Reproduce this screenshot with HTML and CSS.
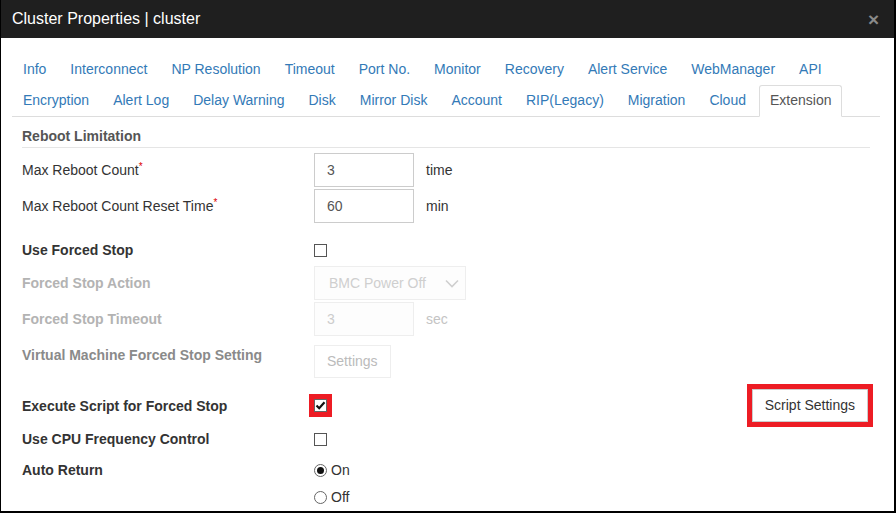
FILE: index.html
```html
<!DOCTYPE html>
<html>
<head>
<meta charset="utf-8">
<link rel="stylesheet" href="styles.css">
</head>
<body>
<div class="dialog">
  <div class="titlebar">
    <span class="title">Cluster Properties | cluster</span>
    <span class="close">×</span>
  </div>
  <div class="content">
    <ul class="tabs">
      <li><a>Info</a></li>
      <li><a>Interconnect</a></li>
      <li><a>NP Resolution</a></li>
      <li><a>Timeout</a></li>
      <li><a>Port No.</a></li>
      <li><a>Monitor</a></li>
      <li><a>Recovery</a></li>
      <li><a>Alert Service</a></li>
      <li><a>WebManager</a></li>
      <li><a>API</a></li>
      <li><a>Encryption</a></li>
      <li><a>Alert Log</a></li>
      <li><a>Delay Warning</a></li>
      <li><a>Disk</a></li>
      <li><a>Mirror Disk</a></li>
      <li><a>Account</a></li>
      <li><a>RIP(Legacy)</a></li>
      <li><a>Migration</a></li>
      <li><a>Cloud</a></li>
      <li class="active"><a>Extension</a></li>
    </ul>
    <div class="pane">
      <div class="section-title">Reboot Limitation</div>

      <div class="row row-input first">
        <div class="lbl">Max Reboot Count<span class="req">*</span></div>
        <div class="ctl"><div class="input">3</div><span class="unit">time</span></div>
      </div>
      <div class="row row-input">
        <div class="lbl">Max Reboot Count Reset Time<span class="req">*</span></div>
        <div class="ctl"><div class="input">60</div><span class="unit">min</span></div>
      </div>

      <div class="row row-check-top">
        <div class="lbl bold">Use Forced Stop</div>
        <div class="ctl"><span class="cb"></span></div>
      </div>
      <div class="row row-select">
        <div class="lbl bold disabled">Forced Stop Action</div>
        <div class="ctl">
          <div class="select">
            <span>BMC Power Off</span>
            <svg class="chev" width="14" height="9" viewBox="0 0 14 9"><path d="M1 1.5 L7 7.5 L13 1.5" fill="none" stroke="#cfcfcf" stroke-width="1.6"/></svg>
          </div>
        </div>
      </div>
      <div class="row row-input">
        <div class="lbl bold disabled">Forced Stop Timeout</div>
        <div class="ctl"><div class="input dis">3</div><span class="unit dis-unit">sec</span></div>
      </div>
      <div class="row row-vm">
        <div class="lbl bold vm">Virtual Machine Forced Stop Setting</div>
        <div class="ctl"><div class="btn dis-btn">Settings</div></div>
      </div>

      <div class="row row-exec">
        <div class="lbl bold">Execute Script for Forced Stop</div>
        <div class="ctl">
          <span class="cb checked hl">
            <svg width="11" height="11" viewBox="0 0 11 11"><path d="M1.5 5.5 L4.2 8.2 L9.5 2.2" fill="none" stroke="#111" stroke-width="2.2"/></svg>
          </span>
          <div class="spacer"></div>
          <div class="btn hl-btn">Script Settings</div>
        </div>
      </div>
      <div class="row row-cpu">
        <div class="lbl bold">Use CPU Frequency Control</div>
        <div class="ctl"><span class="cb"></span></div>
      </div>
      <div class="row row-radio">
        <div class="lbl bold">Auto Return</div>
        <div class="ctl"><span class="rb on"></span><span class="rlabel">On</span></div>
      </div>
      <div class="row row-radio2">
        <div class="lbl"></div>
        <div class="ctl"><span class="rb"></span><span class="rlabel">Off</span></div>
      </div>
    </div>
  </div>
</div>
</body>
</html>
```
FILE: styles.css
```css
html, body {
  margin: 0;
  padding: 0;
  background: #fff;
}
body {
  font-family: "Liberation Sans", Arial, sans-serif;
  font-size: 14px;
  color: #333;
}
.dialog {
  width: 896px;
  height: 513px;
  box-sizing: border-box;
  border-left: 1px solid #000;
  border-right: 2px solid #000;
  border-bottom: 2px solid #000;
  overflow: hidden;
  background: #fff;
}
.titlebar {
  height: 38px;
  background: #1f1f1f;
  display: flex;
  align-items: center;
  justify-content: space-between;
  padding: 0 15px 0 11px;
}
.title {
  color: #fff;
  font-size: 16px;
}
.close {
  color: #8a8a8a;
  font-size: 19px;
  font-weight: bold;
  line-height: 1;
}
.content {
  padding: 16px 14px 0 11px;
}
.tabs {
  list-style: none;
  margin: 0;
  padding: 0;
  display: flex;
  flex-wrap: wrap;
  border-bottom: 1px solid #ddd;
}
.tabs li {
  margin-bottom: -1px;
  margin-right: 2px;
}
.tabs a {
  display: block;
  padding: 4px 10px 6px;
  line-height: 20px;
  border: 1px solid transparent;
  border-radius: 3px 3px 0 0;
  color: #337ab7;
}
.tabs li.active a {
  color: #555;
  background: #fff;
  border-color: #ddd #ddd transparent;
}
.pane {
  padding: 0 10px;
}
.section-title {
  margin-top: 10px;
  font-size: 14px;
  font-weight: bold;
  color: #555;
  line-height: 18px;
  padding-bottom: 2px;
  border-bottom: 1px solid #e5e5e5;
}
.row {
  display: flex;
  align-items: center;
}
.lbl {
  width: 292px;
  flex: none;
  line-height: 20px;
}
.lbl.bold {
  font-weight: bold;
  font-size: 14px;
}
.lbl.disabled {
  color: #b3b3b3;
}
.lbl.vm {
  color: #8a8a8a;
}
.req {
  color: #d00;
  font-size: 10px;
  vertical-align: top;
  line-height: 14px;
}
.ctl {
  display: flex;
  align-items: center;
  flex: 1;
}
.row-input {
  height: 34px;
  margin-top: 2px;
}
.row-input.first {
  margin-top: 5px;
}
.row-check-top {
  height: 32px;
  margin-top: 11px;
}
.row-select {
  height: 34px;
}
.row-vm {
  height: 33px;
  margin-top: 9px;
  align-items: flex-start;
}
.row-exec {
  height: 43px;
  margin-top: 6px;
}
.row-cpu {
  height: 22px;
  margin-top: 1px;
}
.row-radio {
  height: 20px;
  margin-top: 10px;
}
.row-radio2 {
  height: 20px;
  margin-top: 7px;
}
.input {
  width: 100px;
  height: 34px;
  box-sizing: border-box;
  border: 1px solid #ccc;
  padding: 0 12px;
  line-height: 32px;
  color: #555;
}
.input.dis {
  border-color: #eee;
  background: #fdfdfd;
  color: #ccc;
}
.unit {
  margin-left: 12px;
  color: #333;
}
.unit.dis-unit {
  color: #c4c4c4;
}
.select {
  width: 152px;
  height: 34px;
  box-sizing: border-box;
  border: 1px solid #eee;
  background: #fdfdfd;
  color: #cfcfcf;
  display: flex;
  align-items: center;
  justify-content: space-between;
  padding: 0 6px 0 14px;
}
.btn {
  height: 33px;
  box-sizing: border-box;
  border: 1px solid #ccc;
  padding: 0 12px;
  line-height: 31px;
  background: #fff;
  color: #333;
}
.btn.dis-btn {
  border-color: #eee;
  color: #bbb;
}
.btn.hl-btn {
  outline: 5px solid #ed1c24;
  margin-right: 2px;
}
.spacer {
  flex: 1;
}
.cb {
  width: 13px;
  height: 13px;
  box-sizing: border-box;
  border: 1px solid #555;
  background: #fff;
  display: inline-flex;
  align-items: center;
  justify-content: center;
}
.cb.hl {
  outline: 5px solid #ed1c24;
  border-color: #666;
}
.rb {
  width: 13px;
  height: 13px;
  box-sizing: border-box;
  border: 1px solid #666;
  border-radius: 50%;
  background: #fff;
  display: inline-flex;
  align-items: center;
  justify-content: center;
}
.rb.on::after {
  content: "";
  width: 7px;
  height: 7px;
  border-radius: 50%;
  background: #111;
}
.rlabel {
  margin-left: 4px;
  color: #333;
}
```
